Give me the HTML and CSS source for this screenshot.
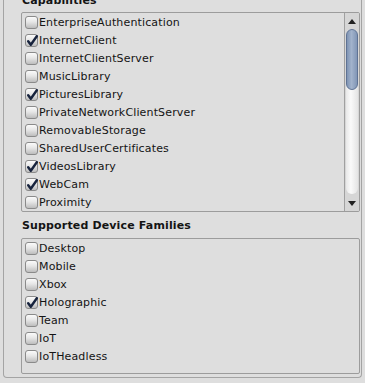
FILE: index.html
```html
<!DOCTYPE html>
<html>
<head>
<meta charset="utf-8">
<link rel="stylesheet" href="styles.css">
</head>
<body>
<div class="panel">
  <div class="title">Capabilities</div>
  <div class="box scrollbox">
    <div class="list">
      <div class="row"><span class="cb"></span>EnterpriseAuthentication</div>
      <div class="row"><span class="cb on"><svg viewBox="0 0 12 12"><path d="M2.2 6.2 L4.8 9.8 L10.8 1.2"/></svg></span>InternetClient</div>
      <div class="row"><span class="cb"></span>InternetClientServer</div>
      <div class="row"><span class="cb"></span>MusicLibrary</div>
      <div class="row"><span class="cb on"><svg viewBox="0 0 12 12"><path d="M2.2 6.2 L4.8 9.8 L10.8 1.2"/></svg></span>PicturesLibrary</div>
      <div class="row"><span class="cb"></span>PrivateNetworkClientServer</div>
      <div class="row"><span class="cb"></span>RemovableStorage</div>
      <div class="row"><span class="cb"></span>SharedUserCertificates</div>
      <div class="row"><span class="cb on"><svg viewBox="0 0 12 12"><path d="M2.2 6.2 L4.8 9.8 L10.8 1.2"/></svg></span>VideosLibrary</div>
      <div class="row"><span class="cb on"><svg viewBox="0 0 12 12"><path d="M2.2 6.2 L4.8 9.8 L10.8 1.2"/></svg></span>WebCam</div>
      <div class="row"><span class="cb"></span>Proximity</div>
    </div>
    <div class="scrollbar">
      <div class="sb-btn"><span class="tri up"></span></div>
      <div class="sb-track"><div class="sb-thumb"></div></div>
      <div class="sb-btn"><span class="tri down"></span></div>
    </div>
  </div>
  <div class="title title2">Supported Device Families</div>
  <div class="box devbox">
    <div class="row"><span class="cb"></span>Desktop</div>
    <div class="row"><span class="cb"></span>Mobile</div>
    <div class="row"><span class="cb"></span>Xbox</div>
    <div class="row"><span class="cb on"><svg viewBox="0 0 12 12"><path d="M2.2 6.2 L4.8 9.8 L10.8 1.2"/></svg></span>Holographic</div>
    <div class="row"><span class="cb"></span>Team</div>
    <div class="row"><span class="cb"></span>IoT</div>
    <div class="row"><span class="cb"></span>IoTHeadless</div>
  </div>
</div>
<div class="next-panel"></div>
</body>
</html>
```
FILE: styles.css
```css
html, body {
  margin: 0;
  padding: 0;
  background: #dedede;
  overflow: hidden;
}
body {
  font-family: "DejaVu Sans", Verdana, sans-serif;
  font-size: 11px;
  letter-spacing: 0.15px;
  color: #141414;
}
.panel {
  margin: -8px 3px 0 3px;
  border: 1px solid #a4a4a4;
  border-top: none;
  border-radius: 0 0 4px 4px;
  padding: 0 1px 3px 17px;
}
.title {
  height: 18px;
  line-height: 18px;
  font-weight: bold;
  padding-left: 1px;
  margin-bottom: 2px;
}
.title2 {
  margin-top: 5px;
  margin-bottom: 3px;
}
.box {
  border: 1px solid #9c9c9c;
  border-radius: 2px;
  background: #dedede;
}
.scrollbox {
  display: flex;
  height: 198px;
  overflow: hidden;
}
.list {
  flex: 1;
  overflow: hidden;
}
.devbox {
  padding-bottom: 8px;
}
.row {
  height: 18px;
  box-sizing: border-box;
  padding-top: 1px;
  display: flex;
  align-items: center;
  padding-left: 3px;
  white-space: nowrap;
}
.cb {
  position: relative;
  width: 11px;
  height: 11px;
  border: 1px solid #8a8a8a;
  border-radius: 3px;
  background: linear-gradient(#fbfbfb, #e6e6e6 45%, #bdbdbd);
  margin-right: 1px;
  flex: none;
  box-sizing: content-box;
}
.cb svg {
  position: absolute;
  left: 0;
  top: 0;
  width: 12px;
  height: 12px;
}
.cb svg path {
  fill: none;
  stroke: #17233d;
  stroke-width: 2.4;
  stroke-linecap: round;
  stroke-linejoin: round;
}
.scrollbar {
  width: 14px;
  border-left: 1px solid #a0a0a0;
  background: #d6d6d6;
  display: flex;
  flex-direction: column;
  flex: none;
}
.sb-btn {
  height: 15px;
  display: flex;
  align-items: center;
  justify-content: center;
  flex: none;
}
.tri {
  width: 0;
  height: 0;
  border-left: 4px solid transparent;
  border-right: 4px solid transparent;
}
.tri.up {
  border-bottom: 5px solid #222;
  margin-top: 2px;
}
.tri.down {
  border-top: 5px solid #222;
}
.sb-track {
  flex: 1;
  margin: 1px 1px 2px 1px;
  border-radius: 6px;
  background: linear-gradient(90deg, #e8e8e8, #fafafa 40%, #e4e4e4);
  display: flex;
  flex-direction: column;
}
.sb-thumb {
  height: 59px;
  border: 1px solid #5f7394;
  border-radius: 6px;
  background: linear-gradient(90deg, #7f94b4, #a2b3cc 45%, #8196b6);
}
.next-panel {
  margin: 6px 3px 0 3px;
  height: 12px;
  border: 1px solid #a4a4a4;
  border-bottom: none;
  border-radius: 4px 4px 0 0;
}
```
